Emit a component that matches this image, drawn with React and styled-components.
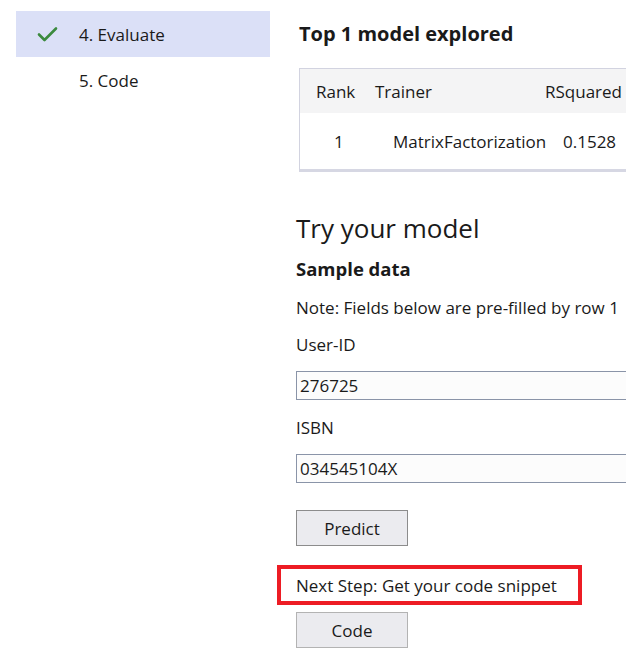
import React from "react";
import styled, { createGlobalStyle } from "styled-components";

const Global = createGlobalStyle`
  html, body { margin: 0; padding: 0; background: #ffffff; }
  body {
    width: 626px; height: 672px; overflow: hidden;
    font-family: "Segoe UI", "Open Sans", "Noto Sans", sans-serif;
    color: #1a1a1a;
  }
  * { box-sizing: border-box; }
`;

const Page = styled.div`
  display: flex;
  align-items: flex-start;
  width: 626px;
`;

const Sidebar = styled.nav`
  flex: 0 0 254px;
  margin: 11px 0 0 16px;
  display: flex;
  flex-direction: column;
`;

const StepItem = styled.div`
  height: 46px;
  display: flex;
  align-items: center;
  padding-left: 21px;
  gap: 21px;
  font-size: 17px;
  background: ${(p) => (p.$active ? "#dbe0f7" : "transparent")};
`;

const IconSlot = styled.span`
  width: 21px;
  height: 16px;
  display: flex;
  align-items: center;
`;

const Main = styled.main`
  flex: 1 1 auto;
  margin-left: 26px;
  min-width: 0;
  display: flex;
  flex-direction: column;
`;

const TopSection = styled.section`
  padding-left: 3px;
  display: flex;
  flex-direction: column;
`;

const Title = styled.h2`
  margin: 20px 0 0;
  font-size: 20px;
  font-weight: 700;
  line-height: 27px;
`;

const Table = styled.div`
  margin-top: 21px;
  width: 360px;
  border-left: 1px solid #d2d3e0;
  border-top: 1px solid #d2d3e0;
  border-bottom: 3px solid #d6d7e3;
  display: flex;
  flex-direction: column;
`;

const Row = styled.div`
  display: grid;
  grid-template-columns: 59px 170px 1fr;
  padding-left: 16px;
  align-items: center;
  height: ${(p) => (p.$head ? "44px" : "56px")};
  background: ${(p) => (p.$head ? "#f4f4f5" : "#ffffff")};
`;

const Cell = styled.div`
  font-size: 17px;
  white-space: nowrap;
  padding-left: ${(p) => (p.$data ? "18px" : "0")};
`;

const Heading = styled.h1`
  margin: 38px 0 0;
  font-size: 26px;
  font-weight: 400;
  line-height: 36px;
`;

const SubHeading = styled.h3`
  margin: 11px 0 0;
  font-size: 18.5px;
  font-weight: 700;
  line-height: 24px;
`;

const Text = styled.p`
  margin: ${(p) => p.$mt || "14px"} 0 0;
  font-size: 17px;
  line-height: 24px;
  white-space: nowrap;
`;

const Input = styled.input`
  margin-top: ${(p) => p.$mt || "14px"};
  width: 400px;
  height: 29px;
  border: 1px solid #8a94a8;
  background: #fcfcfc;
  padding: 0 3px;
  font-family: inherit;
  font-size: 17px;
  color: #1a1a1a;
  outline: none;
`;

const Button = styled.button`
  margin-top: ${(p) => p.$mt || "0"};
  width: 112px;
  height: 36px;
  background: #ebebef;
  border: 1px solid ${(p) => (p.$light ? "#b3b3b3" : "#8c8c8c")};
  font-family: inherit;
  font-size: 17px;
  color: #1a1a1a;
  padding: 0;
`;

const Callout = styled.div`
  margin: 19px 0 0 -19px;
  width: 305px;
  height: 40px;
  border: 4px solid #ed1c24;
  padding: 5px 0 0 15px;
  font-size: 17px;
  line-height: 24px;
  white-space: nowrap;
`;

const Check = () => (
  <svg width="21" height="16" viewBox="0 0 21 16" fill="none">
    <path d="M2 8.5 L7.5 14 L19 2.5" stroke="#3b8a3e" strokeWidth="2.6" strokeLinecap="round" strokeLinejoin="round" />
  </svg>
);

export default function App() {
  return (
    <>
      <Global />
      <Page>
        <Sidebar>
          <StepItem $active>
            <IconSlot><Check /></IconSlot>
            <span>4. Evaluate</span>
          </StepItem>
          <StepItem>
            <IconSlot />
            <span>5. Code</span>
          </StepItem>
        </Sidebar>
        <Main>
          <TopSection>
            <Title>Top 1 model explored</Title>
            <Table>
              <Row $head>
                <Cell>Rank</Cell>
                <Cell>Trainer</Cell>
                <Cell>RSquared</Cell>
              </Row>
              <Row>
                <Cell $data>1</Cell>
                <Cell $data>MatrixFactorization</Cell>
                <Cell $data>0.1528</Cell>
              </Row>
            </Table>
          </TopSection>
          <Heading>Try your model</Heading>
          <SubHeading>Sample data</SubHeading>
          <Text $mt="15px">Note: Fields below are pre-filled by row 1</Text>
          <Text $mt="13px">User-ID</Text>
          <Input $mt="14px" defaultValue="276725" />
          <Text $mt="16px">ISBN</Text>
          <Input $mt="14px" defaultValue="034545104X" />
          <Button $mt="27px">Predict</Button>
          <Callout>Next Step: Get your code snippet</Callout>
          <Button $mt="7px" $light>Code</Button>
        </Main>
      </Page>
    </>
  );
}
